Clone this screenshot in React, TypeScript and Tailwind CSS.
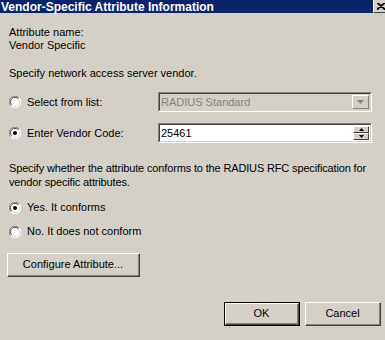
import React from 'react';

const FONT = { fontFamily: '"Liberation Sans", Arial, sans-serif' };

function Radio({ checked }: { checked?: boolean }) {
  return (
    <svg width="12" height="12" viewBox="0 0 12 12" className="shrink-0">
      <circle cx="6" cy="6" r="5.5" fill="#ffffff" />
      <path d="M10 2 A5.5 5.5 0 0 0 1.6 9.6" fill="none" stroke="#808080" strokeWidth="1" />
      <path d="M9.2 2.8 A4.4 4.4 0 0 0 2.6 8.8" fill="none" stroke="#404040" strokeWidth="1" />
      <path d="M2 10 A5.5 5.5 0 0 0 10.4 2.4" fill="none" stroke="#ffffff" strokeWidth="1" />
      <path d="M2.8 9.2 A4.4 4.4 0 0 0 9.4 3.2" fill="none" stroke="#d4d0c8" strokeWidth="1" />
      {checked && <circle cx="6" cy="6" r="2" fill="#000000" />}
    </svg>
  );
}

function Button({ label, className = '', def = false }: { label: string; className?: string; def?: boolean }) {
  return (
    <div className={`flex ${def ? 'border border-black' : ''} ${className}`}>
      <div className="flex-1 flex items-center justify-center bg-[#d4d0c8] border-t border-l border-t-white border-l-white border-r border-b border-r-[#404040] border-b-[#404040] text-[11px] text-black">
        <div className="flex-1 h-full flex items-center justify-center border-r border-b border-r-[#808080] border-b-[#808080]">
          {label}
        </div>
      </div>
    </div>
  );
}

function Sunken({ children, className = '' }: { children: React.ReactNode; className?: string }) {
  return (
    <div className={`border-t border-l border-t-[#808080] border-l-[#808080] border-r border-b border-r-white border-b-white ${className}`}>
      <div className="h-full flex border-t border-l border-t-[#404040] border-l-[#404040] border-r border-b border-r-[#d4d0c8] border-b-[#d4d0c8]">
        {children}
      </div>
    </div>
  );
}

export default function App() {
  return (
    <div className="w-[385px] h-[340px] flex bg-[#d4d0c8] overflow-hidden" style={FONT}>
      <div className="flex-1 flex flex-col">
        {/* Title bar */}
        <div className="h-[13px] bg-[#0a246a] flex items-end justify-between">
          <span className="text-white font-bold text-[12px] leading-[12px] pl-[1px] -mt-[2px]">
            Vendor-Specific Attribute Information
          </span>
          <div className="w-[15px] h-[13px] mr-[2px] bg-[#d4d0c8] border-l border-l-white border-r border-b border-r-[#404040] border-b-[#404040] flex items-center justify-center">
            <svg width="8" height="7" viewBox="0 0 8 7">
              <path d="M0 0 L8 7 M1 0 L8 6 M8 0 L0 7 M7 0 L0 6" stroke="#000" strokeWidth="1.2" />
            </svg>
          </div>
        </div>

        <div className="flex flex-col pl-[9px] pr-[9px] text-[11px] leading-[13px] text-black">
          <div className="mt-[13px]">Attribute name:</div>
          <div>Vendor Specific</div>

          <div className="mt-[15px]">Specify network access server vendor.</div>

          {/* Select from list */}
          <div className="mt-[12px] h-[20px] flex items-center">
            <div className="w-[149px] flex items-center gap-[6px]">
              <Radio />
              <span>Select from list:</span>
            </div>
            <Sunken className="w-[214px] h-[20px]">
              <div className="flex-1 flex items-center pl-[1px] text-[#808080] bg-[#d4d0c8]">RADIUS Standard</div>
              <div className="w-[17px] m-[1px] bg-[#d4d0c8] border-t border-l border-t-white border-l-white border-r border-b border-r-[#808080] border-b-[#808080] flex items-center justify-center">
                <svg width="7" height="4" viewBox="0 0 7 4">
                  <path d="M0 0 H7 L3.5 4 Z" fill="#808080" />
                </svg>
              </div>
            </Sunken>
          </div>

          {/* Enter Vendor Code */}
          <div className="mt-[11px] h-[20px] flex items-center">
            <div className="w-[149px] flex items-center gap-[6px]">
              <Radio checked />
              <span>Enter Vendor Code:</span>
            </div>
            <Sunken className="w-[214px] h-[20px]">
              <div className="flex-1 flex items-center pl-[1px] bg-white">25461</div>
              <div className="w-[17px] flex flex-col bg-white py-[1px] pr-[1px]">
                <div className="flex-1 bg-[#d4d0c8] border-t border-l border-t-white border-l-white border-r border-b border-r-[#404040] border-b-[#404040] flex items-center justify-center">
                  <svg width="5" height="3" viewBox="0 0 5 3"><path d="M0 3 H5 L2.5 0 Z" fill="#000" /></svg>
                </div>
                <div className="flex-1 bg-[#d4d0c8] border-t border-l border-t-white border-l-white border-r border-b border-r-[#404040] border-b-[#404040] flex items-center justify-center">
                  <svg width="5" height="3" viewBox="0 0 5 3"><path d="M0 0 H5 L2.5 3 Z" fill="#000" /></svg>
                </div>
              </div>
            </Sunken>
          </div>

          <div className="mt-[18px] w-[372px] leading-[14px] tracking-[-0.15px]">
            Specify whether the attribute conforms to the RADIUS RFC specification for vendor specific attributes.
          </div>

          <div className="mt-[12px] flex items-center gap-[6px]">
            <Radio checked />
            <span>Yes. It conforms</span>
          </div>
          <div className="mt-[11px] flex items-center gap-[6px]">
            <Radio />
            <span>No. It does not conform</span>
          </div>

          <Button label="Configure Attribute..." className="mt-[15px] -ml-[2px] w-[133px] h-[24px]" />

          <div className="mt-[25px] flex justify-end gap-[5px]">
            <Button label="OK" def className="w-[76px] h-[24px]" />
            <Button label="Cancel" className="w-[76px] h-[24px]" />
          </div>
        </div>
      </div>
      {/* right window edge */}
      <div className="w-[4px] flex">
        <div className="w-[1px] bg-[#808080]" />
        <div className="w-[1px] bg-[#404040]" />
        <div className="w-[2px] bg-[#d4d0c8]" />
      </div>
    </div>
  );
}
